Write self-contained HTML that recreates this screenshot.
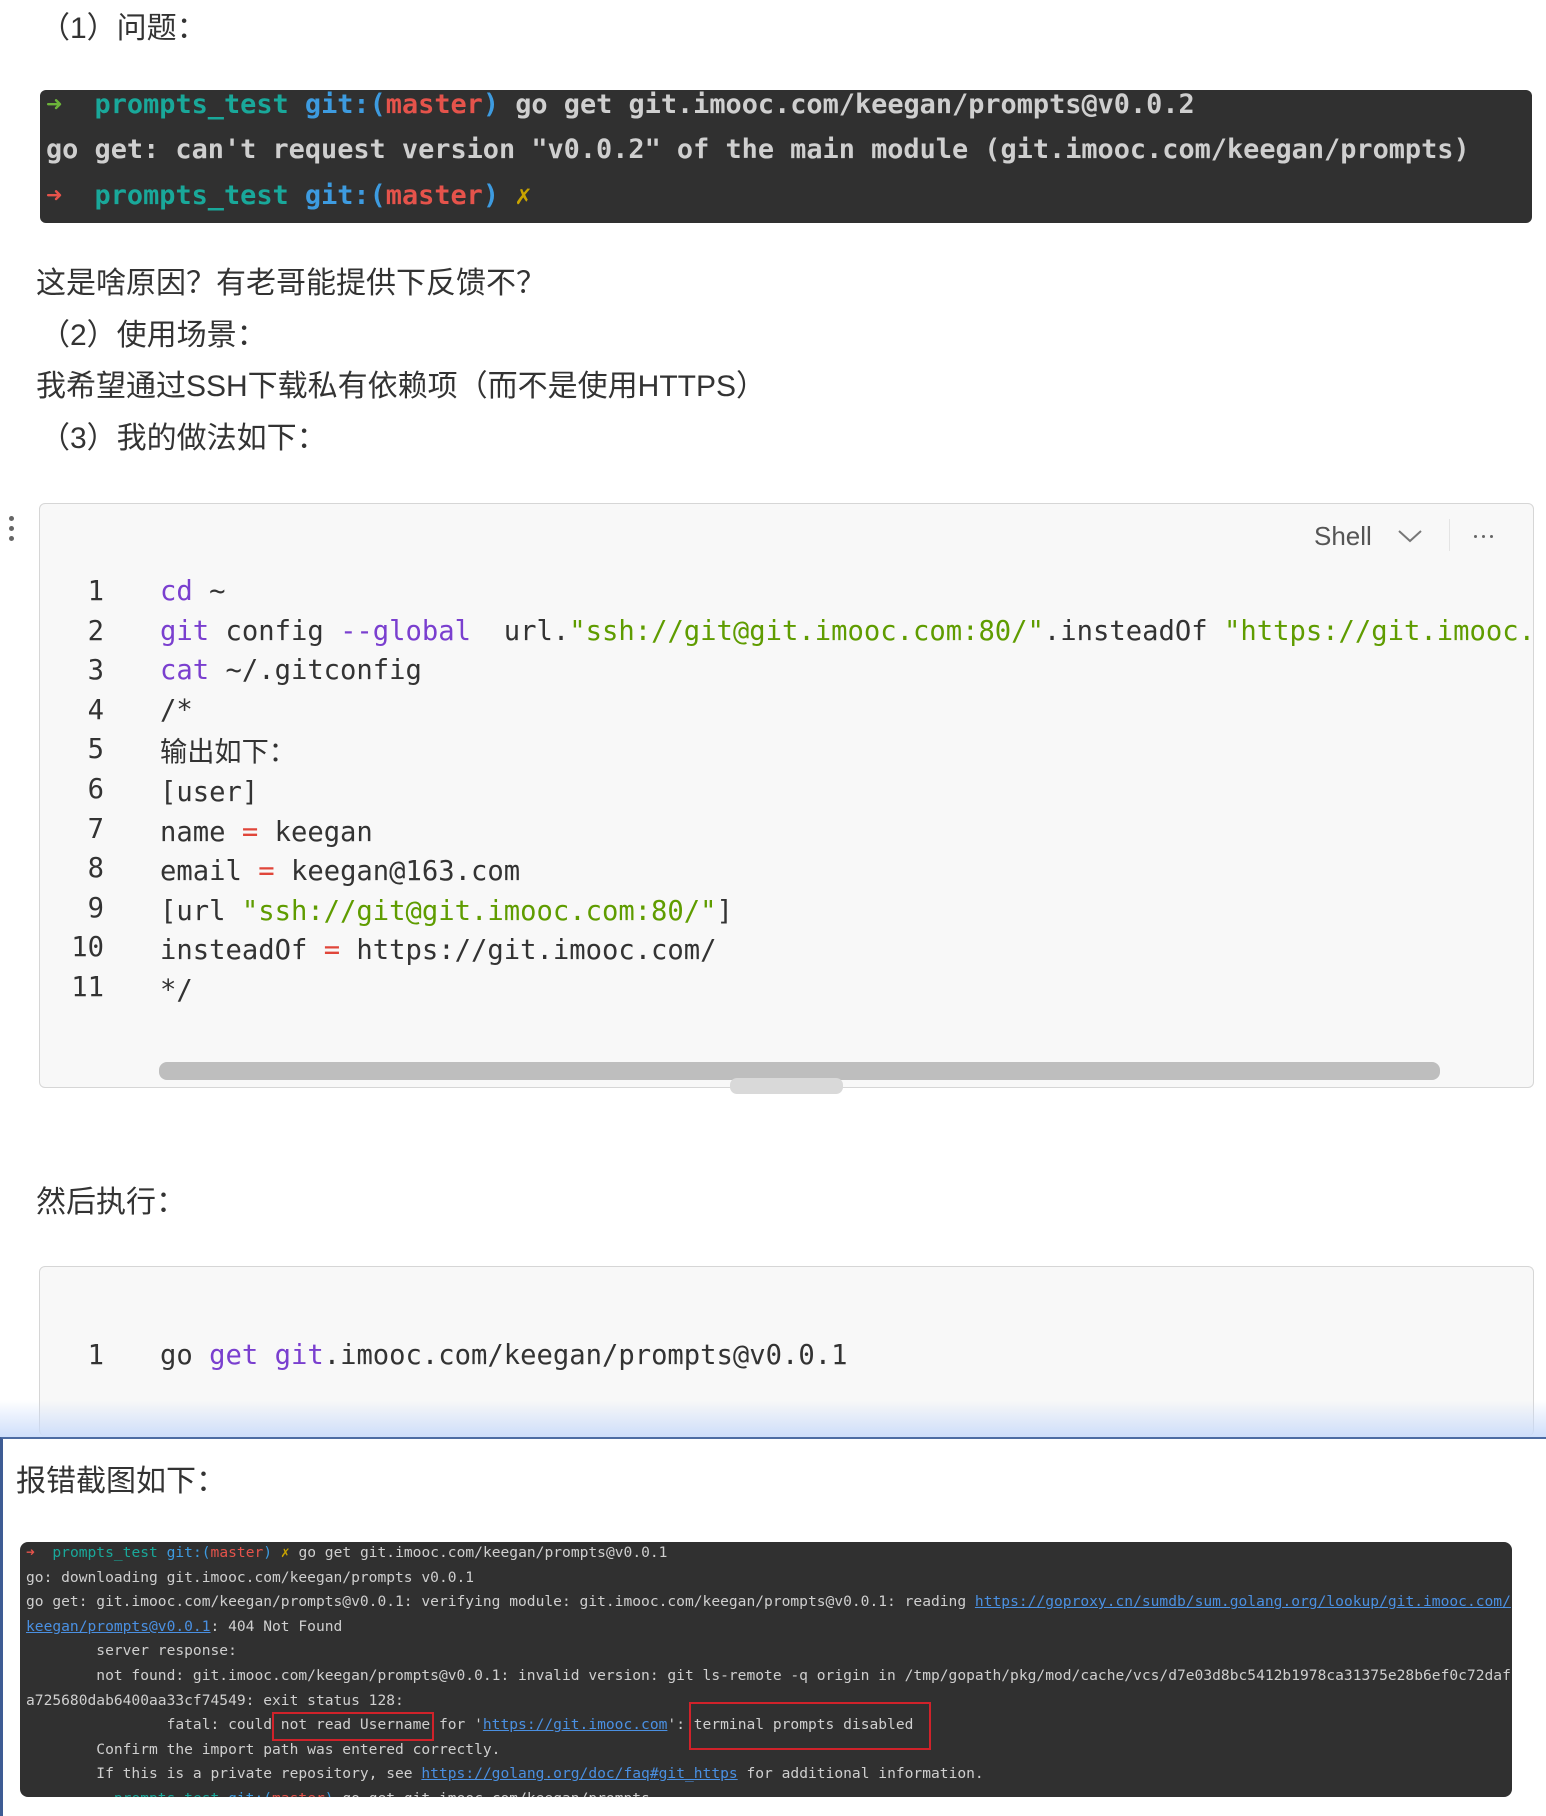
<!DOCTYPE html>
<html><head><meta charset="utf-8"><style>
*{margin:0;padding:0;box-sizing:border-box}
body{width:1546px;height:1816px;background:#fff;position:relative;overflow:hidden;font-family:"Liberation Sans","Noto Sans CJK SC",sans-serif;color:#333}
.t{position:absolute;font-size:30px;line-height:40px;white-space:nowrap}
.m{font-family:"DejaVu Sans Mono","Liberation Mono",monospace;white-space:pre;position:absolute}
.term1{position:absolute;left:40px;top:90px;width:1492px;height:133px;background:#303030;border-radius:6px}
.term1 .m{font-size:26.5px;font-weight:bold;color:#cfcfcf;left:6px;line-height:30px;transform:scaleX(1.014);transform-origin:left}
.c{color:#19a89a}.b{color:#3d9be0}.r{color:#e5534b}.y{color:#c9a400}.g{color:#6cb33a}
.cb{position:absolute;background:#f8f8f8;border:1.5px solid #d6d6d6;border-radius:6px}
.code .m{font-size:27.2px;line-height:40px;color:#333}
.ln{color:#999;text-align:right;width:60px}
.p{color:#7a3fcf}.s{color:#5f9c00}.e{color:#e0463a}
.term2{position:absolute;left:20px;top:1542px;width:1492px;height:255px;background:#303030;border-radius:8px;overflow:hidden}
.term2 .m{font-size:14.6px;color:#cfcfcf;line-height:24.6px;left:6px}
.u{color:#4a90e2;text-decoration:underline}
</style></head><body>
<div class="t" style="left:40px;top:9px">（1）问题：</div>
<div class="term1">
<div class="m" style="top:0"><span class="g">➜</span>  <span class="c">prompts_test</span> <span class="b">git:(</span><span class="r">master</span><span class="b">)</span> go get git.imooc.com/keegan/prompts@v0.0.2</div>
<div class="m" style="top:45px">go get: can't request version "v0.0.2" of the main module (git.imooc.com/keegan/prompts)</div>
<div class="m" style="top:91px"><span class="r">➜</span>  <span class="c">prompts_test</span> <span class="b">git:(</span><span class="r">master</span><span class="b">)</span> <span class="y">✗</span></div>
</div>
<div class="t" style="left:36px;top:264px">这是啥原因？有老哥能提供下反馈不？</div>
<div class="t" style="left:40px;top:316px">（2）使用场景：</div>
<div class="t" style="left:36px;top:367px">我希望通过SSH下载私有依赖项（而不是使用HTTPS）</div>
<div class="t" style="left:40px;top:419px">（3）我的做法如下：</div>
<div style="position:absolute;left:9px;top:516px;width:5px;height:5px;border-radius:50%;background:#666"></div>
<div style="position:absolute;left:9px;top:526px;width:5px;height:5px;border-radius:50%;background:#666"></div>
<div style="position:absolute;left:9px;top:536px;width:5px;height:5px;border-radius:50%;background:#666"></div>
<div class="cb code" style="left:39px;top:503px;width:1495px;height:585px;overflow:hidden">
<div style="position:absolute;left:1274px;top:14px;font-size:26px;color:#555;line-height:36px">Shell</div>
<svg style="position:absolute;left:1357px;top:24px" width="26" height="16"><path d="M2 3 L13 13 L24 3" fill="none" stroke="#777" stroke-width="2"/></svg>
<div style="position:absolute;left:1409px;top:15px;width:1px;height:32px;background:#e4e4e4"></div>
<div style="position:absolute;left:1434px;top:31px;width:3px;height:3px;border-radius:50%;background:#666"></div>
<div style="position:absolute;left:1442px;top:31px;width:3px;height:3px;border-radius:50%;background:#666"></div>
<div style="position:absolute;left:1450px;top:31px;width:3px;height:3px;border-radius:50%;background:#666"></div>
<div class="m ln" style="left:4px;top:68px;line-height:39.6px">1
2
3
4
5
6
7
8
9
10
11</div>
<div class="m" style="left:120px;top:68px;line-height:39.6px"><span class="p">cd</span> ~
<span class="p">git</span> config <span class="p">--global</span>  url.<span class="s">"ssh://git@git.imooc.com:80/"</span>.insteadOf <span class="s">"https://git.imooc.com/"</span>
<span class="p">cat</span> ~/.gitconfig
/*
<span style="font-family:'Noto Sans CJK SC',sans-serif">输出如下：</span>
[user]
name <span class="e">=</span> keegan
email <span class="e">=</span> keegan@163.com
[url <span class="s">"ssh://git@git.imooc.com:80/"</span>]
insteadOf <span class="e">=</span> https://git.imooc.com/
*/</div>
<div style="position:absolute;left:119px;top:558px;width:1281px;height:18px;background:#bebebe;border-radius:8px"></div>
</div>
<div style="position:absolute;left:730px;top:1078px;width:113px;height:16px;background:#d9d9d9;border-radius:7px"></div>
<div class="t" style="left:36px;top:1183px">然后执行：</div>
<div class="cb code" style="left:39px;top:1266px;width:1495px;height:170px;border-bottom:none">
<div class="m ln" style="left:4px;top:69px">1</div>
<div class="m" style="left:120px;top:69px">go <span class="p">get</span> <span class="p">git</span>.imooc.com/keegan/prompts@v0.0.1</div>
</div>
<div style="position:absolute;left:0;top:1400px;width:1546px;height:38px;background:linear-gradient(rgba(220,232,252,0),rgba(200,218,250,0.9))"></div>
<div style="position:absolute;left:0;top:1437px;width:1546px;height:379px;border-top:2px solid #4d6ca3;border-left:3px solid #3e5c94;background:#fff"></div>
<div class="t" style="left:16px;top:1462px">报错截图如下：</div>
<div class="term2">
<div class="m" style="top:-1px"><span class="r">➜</span>  <span class="c">prompts_test</span> <span class="b">git:(</span><span class="r">master</span><span class="b">)</span> <span class="y">✗</span> go get git.imooc.com/keegan/prompts@v0.0.1
go: downloading git.imooc.com/keegan/prompts v0.0.1
go get: git.imooc.com/keegan/prompts@v0.0.1: verifying module: git.imooc.com/keegan/prompts@v0.0.1: reading <span class="u">https://goproxy.cn/sumdb/sum.golang.org/lookup/git.imooc.com/</span>
<span class="u">keegan/prompts@v0.0.1</span>: 404 Not Found
        server response:
        not found: git.imooc.com/keegan/prompts@v0.0.1: invalid version: git ls-remote -q origin in /tmp/gopath/pkg/mod/cache/vcs/d7e03d8bc5412b1978ca31375e28b6ef0c72daf
a725680dab6400aa33cf74549: exit status 128:
                fatal: could not read Username for '<span class="u">https://git.imooc.com</span>': terminal prompts disabled
        Confirm the import path was entered correctly.
        If this is a private repository, see <span class="u">https://golang.org/doc/faq#git_https</span> for additional information.
          <span class="c">prompts_test</span> <span class="b">git:(</span><span class="r">master</span><span class="b">)</span> go get git.imooc.com/keegan/prompts</div>
<div style="position:absolute;left:252px;top:170px;width:162px;height:29px;border:2px solid #d0222a"></div>
<div style="position:absolute;left:669px;top:160px;width:242px;height:48px;border:2px solid #d0222a"></div>
</div>
</body></html>
